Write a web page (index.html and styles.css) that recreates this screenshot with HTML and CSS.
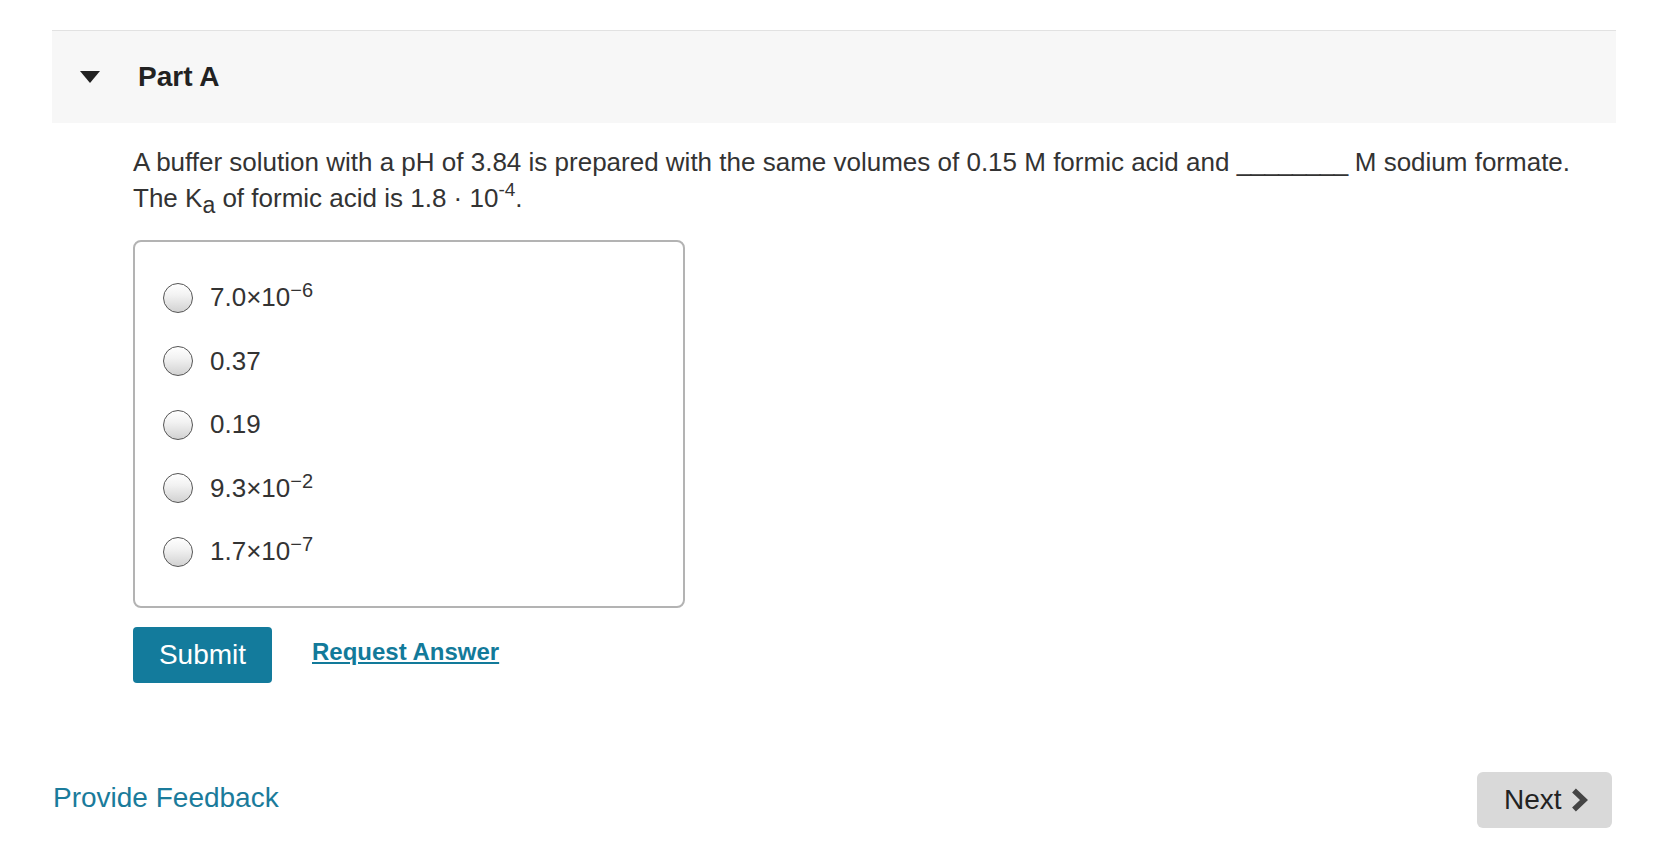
FILE: index.html
```html
<!DOCTYPE html>
<html lang="en">
<head>
<meta charset="utf-8">
<title>Part A</title>
<link rel="stylesheet" href="styles.css">
</head>
<body>
<div class="page">
  <div class="part-header">
    <svg class="caret" width="20" height="12" viewBox="0 0 20 12" aria-hidden="true"><polygon points="0,0 20,0 10,12" fill="#222"/></svg>
    <h2 class="part-title">Part A</h2>
  </div>
  <div class="content">
    <p class="question">A buffer solution with a pH of 3.84 is prepared with the same volumes of 0.15 M formic acid and <span class="blank">________</span> M sodium formate.<br>The K<sub class="sub">a</sub> of formic acid is 1.8 · 10<sup class="sup">-4</sup>.</p>
    <div class="choices">
      <label class="choice"><span class="radio"></span><span class="label">7.0×10<sup class="esup">−6</sup></span></label>
      <label class="choice"><span class="radio"></span><span class="label">0.37</span></label>
      <label class="choice"><span class="radio"></span><span class="label">0.19</span></label>
      <label class="choice"><span class="radio"></span><span class="label">9.3×10<sup class="esup">−2</sup></span></label>
      <label class="choice"><span class="radio"></span><span class="label">1.7×10<sup class="esup">−7</sup></span></label>
    </div>
    <div class="actions">
      <button class="submit" type="button">Submit</button>
      <a class="request" href="#">Request Answer</a>
    </div>
  </div>
  <div class="footer">
    <a class="feedback" href="#">Provide Feedback</a>
    <button class="next" type="button">Next<svg class="chev" width="17" height="26" viewBox="0 0 17 26" aria-hidden="true"><path d="M3 3.5 L13 13 L3 22.5" fill="none" stroke="#444" stroke-width="5.5" stroke-linejoin="miter"/></svg></button>
  </div>
</div>
</body>
</html>
```
FILE: styles.css
```css
html, body {
  margin: 0;
  padding: 0;
  background: #fff;
}
body {
  font-family: "Liberation Sans", Helvetica, Arial, sans-serif;
  color: #333;
}
.page {
  padding: 30px 40px 0 52px;
}
.part-header {
  display: flex;
  align-items: center;
  height: 92px;
  border-top: 1px solid #e2e2e2;
  background: #f7f7f7;
  padding-left: 28px;
}
.caret {
  display: block;
  margin-right: 38px;
}
.part-title {
  margin: 0;
  font-size: 28px;
  font-weight: bold;
  color: #222;
}
.content {
  padding-left: 81px;
}
.question {
  margin: 21px 0 0 0;
  font-size: 26px;
  line-height: 36px;
  color: #333;
}
.blank {
  letter-spacing: -0.6px;
}
.sub {
  font-size: 23px;
  line-height: 0;
  vertical-align: -6px;
}
.sup {
  font-size: 19px;
  line-height: 0;
  vertical-align: 11px;
}
.choices {
  box-sizing: border-box;
  margin-top: 24px;
  width: 552px;
  border: 2px solid #b3b3b3;
  border-radius: 8px;
  padding: 24px 0 22px 28px;
}
.choice {
  display: flex;
  align-items: center;
  height: 63.5px;
}
.radio {
  width: 28px;
  height: 28px;
  border: 1.5px solid #555;
  border-radius: 50%;
  background: linear-gradient(#ffffff 0%, #f2f2f2 40%, #d2d2d2 100%);
  margin-right: 17px;
  flex: none;
}
.label {
  font-size: 26px;
  color: #333;
}
.esup {
  font-size: 20px;
  line-height: 0;
  vertical-align: 9px;
}
.actions {
  display: flex;
  align-items: center;
  margin-top: 19px;
}
.submit {
  width: 139px;
  height: 56px;
  border: 0;
  border-radius: 4px;
  background: #137b9c;
  color: #fff;
  font-family: inherit;
  font-size: 28px;
  padding: 0;
}
.request {
  margin-left: 40px;
  margin-bottom: 6px;
  font-size: 24px;
  font-weight: bold;
  color: #127a9a;
  text-decoration: underline;
}
.footer {
  display: flex;
  justify-content: space-between;
  align-items: center;
  margin-top: 89px;
  padding-right: 4px;
  padding-left: 1px;
}
.feedback {
  font-size: 28px;
  color: #1a7b9b;
  text-decoration: none;
  margin-bottom: 4px;
}
.next {
  display: flex;
  align-items: center;
  width: 135px;
  height: 56px;
  border: 0;
  border-radius: 6px;
  background: #d9d9d9;
  color: #222;
  font-family: inherit;
  font-size: 28px;
  padding: 0 0 0 27px;
}
.chev {
  display: block;
  margin-left: 9px;
}
```
